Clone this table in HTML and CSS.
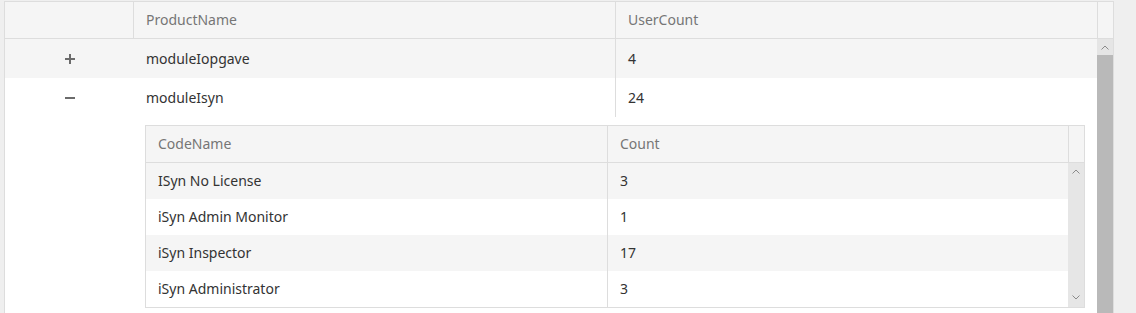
FILE: index.html
```html
<!DOCTYPE html>
<html>
<head>
<meta charset="utf-8">
<link rel="stylesheet" href="styles.css">
</head>
<body>
<div class="grid">
  <div class="hdr">
    <div class="c exp"></div>
    <div class="c name">ProductName</div>
    <div class="c count">UserCount</div>
    <div class="c spacer"></div>
  </div>
  <div class="body">
    <div class="rows">
      <div class="row alt">
        <div class="c exp">
          <svg width="10" height="10" viewBox="0 0 10 10"><path d="M0 5H10M5 0V10" stroke="#6b6b6b" stroke-width="2"/></svg>
        </div>
        <div class="c name">moduleIopgave</div>
        <div class="c count">4</div>
      </div>
      <div class="row">
        <div class="c exp">
          <svg width="10" height="10" viewBox="0 0 10 10"><path d="M0 5H10" stroke="#6b6b6b" stroke-width="2"/></svg>
        </div>
        <div class="c name">moduleIsyn</div>
        <div class="c count">24</div>
      </div>
      <div class="detail">
        <div class="dgrid">
          <div class="dhdr">
            <div class="dc dname">CodeName</div>
            <div class="dc dcount">Count</div>
            <div class="dc dspacer"></div>
          </div>
          <div class="dbody">
            <div class="drows">
              <div class="drow alt"><div class="dc dname">ISyn No License</div><div class="dc dcount">3</div></div>
              <div class="drow"><div class="dc dname">iSyn Admin Monitor</div><div class="dc dcount">1</div></div>
              <div class="drow alt"><div class="dc dname">iSyn Inspector</div><div class="dc dcount">17</div></div>
              <div class="drow"><div class="dc dname">iSyn Administrator</div><div class="dc dcount">3</div></div>
            </div>
            <div class="dscroll">
              <svg class="chev" width="8" height="5" viewBox="0 0 8 5"><path d="M0.5 4.5L4 1L7.5 4.5" fill="none" stroke="#8a8a8a" stroke-width="1"/></svg>
              <svg class="chev" width="8" height="5" viewBox="0 0 8 5"><path d="M0.5 0.5L4 4L7.5 0.5" fill="none" stroke="#8a8a8a" stroke-width="1"/></svg>
            </div>
          </div>
        </div>
      </div>
    </div>
    <div class="vscroll">
      <div class="arrow">
        <svg width="8" height="5" viewBox="0 0 8 5"><path d="M0.5 4.5L4 1L7.5 4.5" fill="none" stroke="#8a8a8a" stroke-width="1"/></svg>
      </div>
      <div class="thumb"></div>
    </div>
  </div>
</div>
</body>
</html>
```
FILE: styles.css
```css
html, body {
  margin: 0;
  padding: 0;
  height: 313px;
  overflow: hidden;
}
body {
  background: #efefef;
  font-family: "Noto Sans", "Open Sans", sans-serif;
  font-size: 14px;
  color: #333;
}
.grid {
  margin: 1px 0 0 4px;
  width: 1110px;
  height: 312px;
  box-sizing: border-box;
  border: 1px solid #ddd;
  border-bottom: none;
  background: #fff;
  display: flex;
  flex-direction: column;
  overflow: hidden;
}
.hdr {
  display: flex;
  height: 36px;
  border-bottom: 1px solid #ddd;
  background: #f5f5f5;
  color: #767676;
  flex: none;
}
.c {
  box-sizing: border-box;
  padding: 0 12px;
  white-space: nowrap;
}
.hdr .c {
  line-height: 36px;
  border-right: 1px solid #ddd;
}
.hdr .exp { width: 129px; }
.hdr .name { width: 482px; }
.hdr .count { width: 482px; }
.hdr .spacer { width: 15px; border-right: none; padding: 0; }

.body {
  display: flex;
  flex: 1;
  min-height: 0;
}
.rows {
  width: 1092px;
}
.row {
  display: flex;
  height: 39px;
  line-height: 39px;
}
.row.alt { background: #f5f5f5; }
.row .exp {
  width: 129px;
  display: flex;
  align-items: center;
  justify-content: center;
  padding: 0;
}
.row .exp svg { display: block; }
.row .name { width: 482px; border-right: 1px solid #ddd; }
.row .count { width: 481px; }

.detail {
  padding: 8px 0 0 140px;
}
.dgrid {
  width: 940px;
  box-sizing: border-box;
  border: 1px solid #ddd;
}
.dhdr {
  display: flex;
  height: 36px;
  border-bottom: 1px solid #ddd;
  background: #f5f5f5;
  color: #767676;
}
.dc {
  box-sizing: border-box;
  padding: 0 12px;
  white-space: nowrap;
}
.dhdr .dc { line-height: 36px; border-right: 1px solid #ddd; }
.dname { width: 462px; }
.dhdr .dcount { width: 461px; }
.dhdr .dspacer { width: 15px; border-right: none; padding: 0; }

.dbody { display: flex; }
.drows { width: 922px; }
.drow {
  display: flex;
  height: 36px;
  line-height: 36px;
}
.drow.alt { background: #f5f5f5; }
.drow .dname { border-right: 1px solid #ddd; }
.drow .dcount { width: 460px; }

.dscroll {
  width: 16px;
  background: #e6e6e6;
  display: flex;
  flex-direction: column;
  justify-content: space-between;
  align-items: center;
  padding: 6px 0 7px;
  box-sizing: border-box;
}
.chev { display: block; }

.vscroll {
  width: 16px;
  display: flex;
  flex-direction: column;
}
.vscroll .arrow {
  height: 16px;
  background: #e5e5e5;
  display: flex;
  align-items: center;
  justify-content: center;
}
.vscroll .arrow svg { display: block; }
.vscroll .thumb {
  flex: 1;
  background: #b9b9b9;
}
```
